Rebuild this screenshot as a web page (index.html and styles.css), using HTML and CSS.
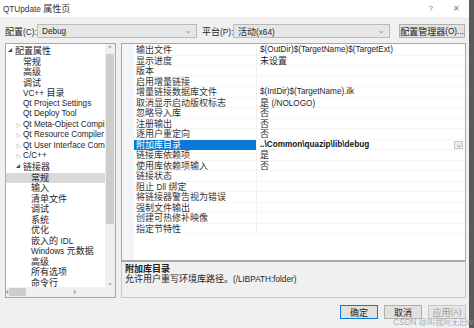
FILE: index.html
```html
<!DOCTYPE html>
<html>
<head>
<meta charset="utf-8">
<link rel="stylesheet" href="styles.css">
</head>
<body>
<div class="page">
  <div class="dialog">
    <div class="titlebar">
      <span class="title"><span class="en">QTUpdate</span> 属性页</span>
      <span class="tb-btns"><span class="help">?</span><span class="close">✕</span></span>
    </div>
    <div class="toolbar">
      <span class="lbl">配置<span class="en">(C):</span></span>
      <div class="combo combo-config"><span class="en">Debug</span><span class="arrow">⌄</span></div>
      <span class="lbl lbl-plat">平台<span class="en">(P):</span></span>
      <div class="combo combo-plat"><span>活动<span class="en">(x64)</span></span><span class="arrow">⌄</span></div>
      <div class="btn btn-mgr">配置管理器<span class="en">(O)...</span></div>
    </div>
    <div class="main">
      <div class="tree">
        <div class="tree-body">
          <div class="tree-items">
            <div class="ti l0"><span class="tri">◢</span>配置属性</div>
            <div class="ti l1">常规</div>
            <div class="ti l1">高级</div>
            <div class="ti l1">调试</div>
            <div class="ti l1"><span class="en">VC++</span> 目录</div>
            <div class="ti l1 en">Qt Project Settings</div>
            <div class="ti l1 en">Qt Deploy Tool</div>
            <div class="ti l1 en"><span class="tri2">▷</span>Qt Meta-Object Compil</div>
            <div class="ti l1 en"><span class="tri2">▷</span>Qt Resource Compiler</div>
            <div class="ti l1 en"><span class="tri2">▷</span>Qt User Interface Compi</div>
            <div class="ti l1 en"><span class="tri2">▷</span>C/C++</div>
            <div class="ti l1"><span class="tri2 open">◢</span>链接器</div>
            <div class="ti l2 sel">常规</div>
            <div class="ti l2">输入</div>
            <div class="ti l2">清单文件</div>
            <div class="ti l2">调试</div>
            <div class="ti l2">系统</div>
            <div class="ti l2">优化</div>
            <div class="ti l2">嵌入的 <span class="en">IDL</span></div>
            <div class="ti l2"><span class="en">Windows</span> 元数据</div>
            <div class="ti l2">高级</div>
            <div class="ti l2">所有选项</div>
            <div class="ti l2">命令行</div>
          </div>
          <div class="vscroll">
            <span class="sarrow">⌃</span>
            <div class="vthumb"></div>
            <span class="sarrow down">⌄</span>
          </div>
        </div>
        <div class="hscroll">
          <span class="harrow">‹</span>
          <div class="hthumb"></div>
          <span class="harrow right">›</span>
          <span class="corner"></span>
        </div>
      </div>
      <div class="right">
        <div class="grid">
          <div class="gutter"></div>
          <div class="rows">
            <div class="row"><span class="name">输出文件</span><span class="val en">$(OutDir)$(TargetName)$(TargetExt)</span></div>
            <div class="row"><span class="name">显示进度</span><span class="val">未设置</span></div>
            <div class="row"><span class="name">版本</span><span class="val"></span></div>
            <div class="row"><span class="name">启用增量链接</span><span class="val"></span></div>
            <div class="row"><span class="name">增量链接数据库文件</span><span class="val en">$(IntDir)$(TargetName).ilk</span></div>
            <div class="row"><span class="name">取消显示启动版权标志</span><span class="val">是 <span class="en">(/NOLOGO)</span></span></div>
            <div class="row"><span class="name">忽略导入库</span><span class="val">否</span></div>
            <div class="row"><span class="name">注册输出</span><span class="val">否</span></div>
            <div class="row"><span class="name">逐用户重定向</span><span class="val">否</span></div>
            <div class="row selrow"><span class="name">附加库目录</span><span class="val en bold">..\Common\quazip\lib\debug<span class="ddbtn">⌄</span></span></div>
            <div class="row"><span class="name">链接库依赖项</span><span class="val">是</span></div>
            <div class="row"><span class="name">使用库依赖项输入</span><span class="val">否</span></div>
            <div class="row"><span class="name">链接状态</span><span class="val"></span></div>
            <div class="row"><span class="name">阻止 <span class="en">Dll</span> 绑定</span><span class="val"></span></div>
            <div class="row"><span class="name">将链接器警告视为错误</span><span class="val"></span></div>
            <div class="row"><span class="name">强制文件输出</span><span class="val"></span></div>
            <div class="row"><span class="name">创建可热修补映像</span><span class="val"></span></div>
            <div class="row"><span class="name">指定节特性</span><span class="val"></span></div>
          </div>
        </div>
        <div class="desc">
          <div class="desc-title">附加库目录</div>
          <div class="desc-text">允许用户重写环境库路径。<span class="en">(/LIBPATH:folder)</span></div>
        </div>
      </div>
    </div>
    <div class="footer">
      <div class="btn btn-ok">确定</div>
      <div class="btn">取消</div>
      <div class="btn btn-dis">应用<span class="en">(A)</span></div>
    </div>
    <div class="watermark"><span class="en">CSDN @</span>叫我阿无旧<span class="en">w</span></div>
  </div>
  <div class="edge"></div>
</div>
</body>
</html>
```
FILE: styles.css
```css
html, body {
  margin: 0;
  padding: 0;
}
body {
  width: 474px;
  height: 328px;
  overflow: hidden;
  font-family: "Liberation Sans", "Noto Sans CJK SC", sans-serif;
  font-size: 9px;
  color: #1e1e1e;
}
.en {
  font-size: 8.2px;
}
.page {
  display: flex;
  height: 328px;
}
.dialog {
  width: 469px;
  background: #f0f0f0;
  position: relative;
  display: flex;
  flex-direction: column;
  white-space: nowrap;
}
.edge {
  width: 5px;
  background: #5a5a5a;
}
.titlebar {
  height: 17px;
  background: #ffffff;
  display: flex;
  align-items: center;
  justify-content: space-between;
  padding: 0 0 0 3px;
}
.title {
  color: #333;
}
.tb-btns {
  display: flex;
  gap: 20px;
  padding-right: 9px;
  color: #777;
  font-size: 8px;
}
.toolbar {
  display: flex;
  align-items: center;
  height: 14px;
  margin-top: 7px;
  padding-left: 5px;
}
.lbl {
  width: 32px;
}
.lbl-plat {
  margin-left: 5px;
  width: 31px;
}
.combo {
  border: 1px solid #b9b9b9;
  background: #e6e6e6;
  display: flex;
  align-items: center;
  justify-content: space-between;
  padding: 0 4px 0 4px;
  box-sizing: border-box;
  height: 14px;
}
.combo-config {
  width: 160px;
}
.combo-plat {
  width: 157px;
}
.arrow {
  color: #888;
  font-size: 8px;
  line-height: 6px;
}
.btn {
  height: 14px;
  box-sizing: border-box;
  border: 1px solid #b0b0b0;
  background: #e1e1e1;
  display: flex;
  align-items: center;
  justify-content: center;
  width: 38px;
}
.btn-mgr {
  margin-left: 9px;
  width: 66px;
}
.main {
  display: flex;
  margin-top: 5px;
  padding-left: 5px;
  gap: 5px;
  height: 255px;
}
.tree {
  width: 111px;
  box-sizing: border-box;
  border: 1px solid #a8a8a8;
  background: #ffffff;
  display: flex;
  flex-direction: column;
}
.tree-body {
  flex: 1;
  display: flex;
  overflow: hidden;
}
.tree-items {
  flex: 1;
  padding-top: 2px;
  overflow: hidden;
}
.ti {
  height: 10.55px;
  line-height: 10.55px;
  position: relative;
}
.l0 { padding-left: 9px; }
.l1 { padding-left: 17px; }
.l2 { padding-left: 25px; }
.tri {
  position: absolute;
  left: 2px;
  font-size: 4px;
  color: #444;
}
.tri2 {
  position: absolute;
  left: 10px;
  font-size: 5px;
  color: #666;
}
.tri2.open {
  font-size: 4px;
  color: #444;
}
.sel {
  background: #d9d9d9;
}
.vscroll {
  width: 10px;
  background: #f0f0f0;
  display: flex;
  flex-direction: column;
  align-items: center;
}
.sarrow {
  height: 9px;
  line-height: 9px;
  font-size: 7px;
  color: #606060;
}
.sarrow.down {
  margin-top: auto;
}
.vthumb {
  width: 8px;
  height: 170px;
  background: #cdcdcd;
  margin-top: 1px;
}
.hscroll {
  height: 10px;
  background: #f0f0f0;
  display: flex;
  align-items: center;
}
.harrow {
  width: 9px;
  text-align: center;
  color: #606060;
  font-size: 9px;
  line-height: 9px;
}
.hthumb {
  width: 72px;
  height: 8px;
  background: #cdcdcd;
}
.harrow.right {
  margin-left: 8px;
}
.corner {
  flex: 1;
}
.right {
  width: 345px;
  display: flex;
  flex-direction: column;
}
.grid {
  height: 218px;
  box-sizing: border-box;
  border: 1px solid #a8a8a8;
  background: #ffffff;
  display: flex;
}
.gutter {
  width: 12px;
  background: #f4f5fa;
}
.rows {
  flex: 1;
  padding-top: 1px;
}
.row {
  display: flex;
  height: 10.5px;
  line-height: 10.5px;
  box-shadow: inset 0 -1px 0 #f5f5f5;
}
.name {
  width: 120px;
  padding-left: 2px;
  color: #333;
  border-right: 1px solid #f0f0f0;
}
.val {
  flex: 1;
  padding-left: 3px;
  position: relative;
}
.selrow .name {
  background: #0a78d7;
  color: #ffffff;
}
.bold {
  font-weight: bold;
  color: #111;
}
.ddbtn {
  position: absolute;
  right: 2px;
  top: 1px;
  width: 9px;
  height: 8px;
  line-height: 6px;
  border: 1px solid #c8c8c8;
  background: #ececec;
  font-size: 7px;
  font-weight: normal;
  text-align: center;
  color: #777;
  box-sizing: border-box;
}
.desc {
  height: 37px;
  box-sizing: border-box;
  border: 1px solid #c6c6c6;
  border-top: 1px solid #a8a8a8;
  padding: 2px 3px;
  line-height: 10px;
}
.desc-title {
  font-weight: bold;
}
.footer {
  display: flex;
  justify-content: flex-end;
  gap: 6px;
  padding-right: 3px;
  margin-top: 7px;
}
.btn-ok {
  border: 1px solid #0a78d7;
}
.btn-dis {
  color: #9a9a9a;
  background: #e6e6e6;
  border-color: #c8c8c8;
}
.watermark {
  position: absolute;
  right: -4px;
  bottom: 1px;
  font-size: 8px;
  color: rgba(150, 150, 150, 0.8);
}
```
